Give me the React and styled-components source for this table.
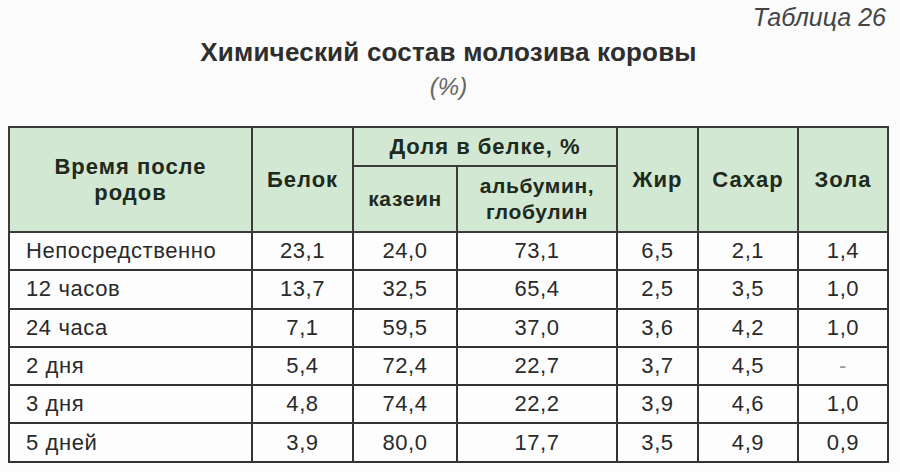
import styled, { createGlobalStyle } from "styled-components";

const GlobalStyle = createGlobalStyle`
  html, body {
    margin: 0;
    padding: 0;
    background: #fbfbfb;
  }
  body {
    font-family: "Liberation Sans", Arial, sans-serif;
  }
`;

const rows = [
  ["Непосредственно", "23,1", "24,0", "73,1", "6,5", "2,1", "1,4"],
  ["12 часов", "13,7", "32,5", "65,4", "2,5", "3,5", "1,0"],
  ["24 часа", "7,1", "59,5", "37,0", "3,6", "4,2", "1,0"],
  ["2 дня", "5,4", "72,4", "22,7", "3,7", "4,5", "-"],
  ["3 дня", "4,8", "74,4", "22,2", "3,9", "4,6", "1,0"],
  ["5 дней", "3,9", "80,0", "17,7", "3,5", "4,9", "0,9"],
];

const colWidths = [243, 101, 104, 160, 81, 100, 90];

export default function App() {
  return (
    <>
      <GlobalStyle />
      <Page>
        <TableNumber>Таблица 26</TableNumber>
        <Title>Химический состав молозива коровы</Title>
        <Units>(%)</Units>
        <Table>
          <colgroup>
            {colWidths.map((w, i) => (
              <col key={i} style={{ width: w }} />
            ))}
          </colgroup>
          <thead>
            <tr>
              <HeadCell rowSpan={2}>
                Время после
                <br />
                родов
              </HeadCell>
              <HeadCell rowSpan={2}>Белок</HeadCell>
              <HeadCell colSpan={2} $top>
                Доля в белке, %
              </HeadCell>
              <HeadCell rowSpan={2}>Жир</HeadCell>
              <HeadCell rowSpan={2}>Сахар</HeadCell>
              <HeadCell rowSpan={2}>Зола</HeadCell>
            </tr>
            <tr>
              <HeadCell $sub>казеин</HeadCell>
              <HeadCell $sub>
                альбумин,
                <br />
                глобулин
              </HeadCell>
            </tr>
          </thead>
          <tbody>
            {rows.map((r) => (
              <BodyRow key={r[0]}>
                {r.map((v, i) =>
                  i === 0 ? (
                    <NameCell key={i}>{v}</NameCell>
                  ) : (
                    <ValueCell key={i} $muted={v === "-"}>
                      {v}
                    </ValueCell>
                  )
                )}
              </BodyRow>
            ))}
          </tbody>
        </Table>
      </Page>
    </>
  );
}

const Page = styled.div`
  width: 900px;
  height: 472px;
  padding: 0 11px 0 8px;
  box-sizing: border-box;
  display: flex;
  flex-direction: column;
  align-items: flex-start;
`;

const TableNumber = styled.div`
  align-self: flex-end;
  margin: 3px 3px 0 0;
  font-size: 25px;
  line-height: 28px;
  font-style: italic;
  color: #444;
`;

const Title = styled.h1`
  align-self: center;
  margin: 6px 0 0 0;
  font-size: 26px;
  line-height: 30px;
  font-weight: bold;
  letter-spacing: 0.2px;
  color: #2e2e2e;
`;

const Units = styled.div`
  align-self: center;
  margin-top: 6px;
  font-size: 24px;
  line-height: 28px;
  font-style: italic;
  color: #666;
`;

const Table = styled.table`
  margin-top: 25px;
  width: 881px;
  flex-shrink: 0;
  table-layout: fixed;
  border-collapse: collapse;
  border: 2px solid #333;
`;

const HeadCell = styled.th`
  background: #d3e8d2;
  border: 2px solid #3a3a3a;
  color: #1d2a1d;
  font-size: ${(p) => (p.$sub ? "21px" : "22px")};
  line-height: 26px;
  font-weight: bold;
  letter-spacing: ${(p) => (p.$sub ? "0.6px" : "1px")};
  text-align: center;
  vertical-align: middle;
  padding: 0;
  height: ${(p) => (p.$top ? "37px" : p.$sub ? "64px" : "auto")};
`;

const BodyRow = styled.tr`
  height: 38.3px;
`;

const NameCell = styled.td`
  border: 2px solid #333;
  background: #fdfdfd;
  padding: 0 0 0 16px;
  font-size: 22px;
  letter-spacing: 0.6px;
  color: #2a2a2a;
  text-align: left;
  vertical-align: middle;
  white-space: nowrap;
`;

const ValueCell = styled.td`
  border: 2px solid #333;
  background: #fdfdfd;
  padding: 0;
  font-size: 22px;
  letter-spacing: 0.6px;
  color: ${(p) => (p.$muted ? "#999" : "#2a2a2a")};
  text-align: center;
  vertical-align: middle;
`;
